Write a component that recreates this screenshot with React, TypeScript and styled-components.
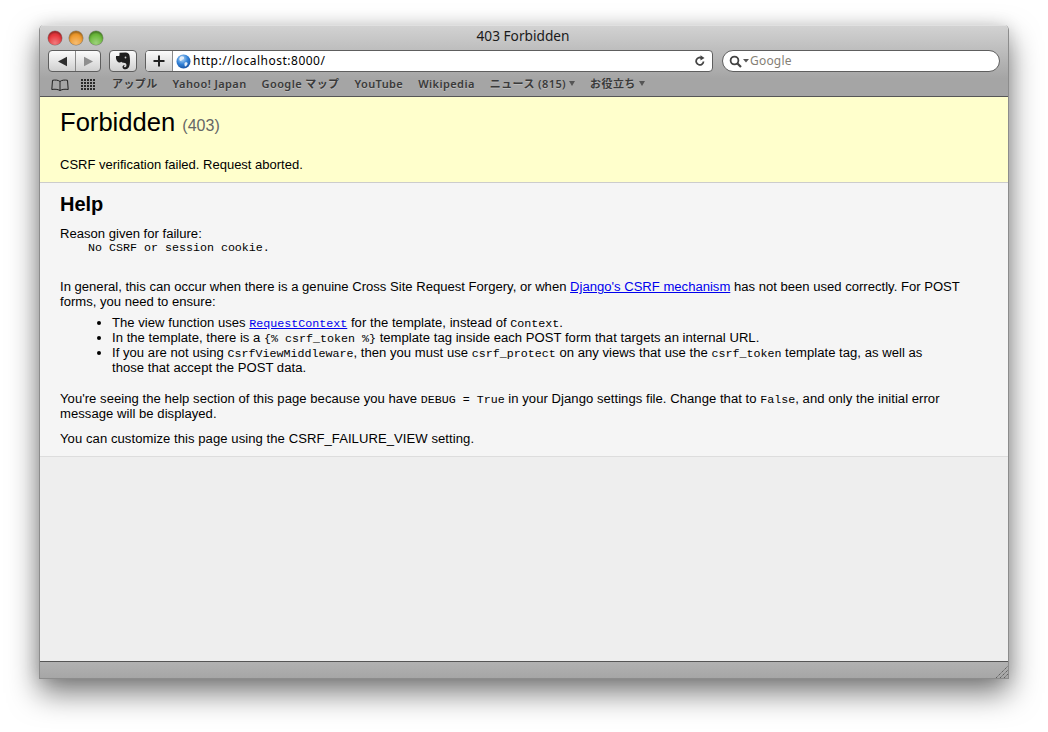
import React from "react";
import styled, { createGlobalStyle } from "styled-components";

const GlobalStyle = createGlobalStyle`
  html, body {
    margin: 0;
    padding: 0;
    background: #fff;
  }
  body {
    width: 1048px;
    height: 732px;
    overflow: hidden;
    font-family: "Liberation Sans", Arial, sans-serif;
  }
`;

const bookmarks = [
  { label: "アップル" },
  { label: "Yahoo! Japan" },
  { label: "Google マップ" },
  { label: "YouTube" },
  { label: "Wikipedia" },
  { label: "ニュース (815)", menu: true },
  { label: "お役立ち", menu: true },
];

const App = () => {
  return (
    <Desktop>
      <GlobalStyle />
      <Window>
        <Chrome>
          <TitleRow>
            <Lights>
              <Light $color="#e8383d" />
              <Light $color="#ef9a2d" />
              <Light $color="#6cba3c" />
            </Lights>
            <Title>403 Forbidden</Title>
          </TitleRow>
          <NavRow>
            <ButtonGroup>
              <NavButton $w={27}>
                <svg width="11" height="11" viewBox="0 0 11 11">
                  <path d="M1 5.500 10 .8v9.400z" fill="#2e2e2e" />
                </svg>
              </NavButton>
              <NavButton $w={25} $divided>
                <svg width="11" height="11" viewBox="0 0 11 11">
                  <path d="M10 5.500 1 .8v9.400z" fill="#8f8f8f" />
                </svg>
              </NavButton>
            </ButtonGroup>
            <ButtonGroup>
              <NavButton $w={27}>
                <svg width="16" height="18" viewBox="0 0 16 18">
                  <path
                    d="M4.500.8 10.500.6c2.500.2 3.800 1.200 4.100 3.300.4 3 .6 6 .1 8.600-.4 2.400-1.500 4.600-3.900 4.800-2 .1-3.300-.8-3.300-2.300 0-1.300 1.200-2 2.300-1.600-.1.600-.9.600-.9 1.200 0 .6.700.9 1.400.7 1.100-.3 1.300-1.500 1.100-2.700-.2-1.200-1.200-1.700-2.500-1.800-1.300-.1-2.100-.3-2.600-1C5.500 11 3.400 10.800 2.200 9.200 1 7.700.8 5.800 1 4h2.800c.5 0 .7-.3.700-.8z"
                    fill="#1f1f1f"
                  />
                  <circle cx="10.500" cy="5.500" r=".9" fill="#cfcfcf" />
                </svg>
              </NavButton>
            </ButtonGroup>
            <AddressGroup>
              <AddButton>
                <svg width="12" height="12" viewBox="0 0 12 12">
                  <path d="M6 .5v11M.5 6h11" stroke="#222" strokeWidth="2" />
                </svg>
              </AddButton>
              <AddressField>
                <svg width="15" height="15" viewBox="0 0 15 15">
                  <defs>
                    <radialGradient id="globe" cx="40%" cy="30%" r="75%">
                      <stop offset="0" stopColor="#b9dcf8" />
                      <stop offset=".55" stopColor="#2f7fd6" />
                      <stop offset="1" stopColor="#174f9e" />
                    </radialGradient>
                  </defs>
                  <circle cx="7.500" cy="7.500" r="7" fill="url(#globe)" />
                  <path d="M5 2.500c2-.5 3.500.5 3 2-.5 1.200-2 .8-2.500 2-.4 1-1.500.5-2-.5-.4-1.200.3-3 1.500-3.500zM9 8.500c1.500-.5 3 0 2.500 1.500-.5 1.300-1.500 2.500-2.500 2.500-.5-1.200-1-3.300 0-4z" fill="#e6eef7" />
                </svg>
                <AddressText>http://localhost:8000/</AddressText>
                <svg width="12" height="12" viewBox="0 0 12 12">
                  <path d="M9.500 6.500a3.700 3.700 0 1 1-1.500-3.300" fill="none" stroke="#444" strokeWidth="1.800" />
                  <path d="M6.500.3 10.500 3 6.500 5.500z" fill="#444" />
                </svg>
              </AddressField>
            </AddressGroup>
            <SearchField>
              <svg width="21" height="13" viewBox="0 0 21 13">
                <circle cx="5.500" cy="5.500" r="3.900" fill="none" stroke="#444" strokeWidth="1.800" />
                <path d="m8.500 8.500 3.500 3.500" stroke="#444" strokeWidth="2.200" />
                <path d="M14 4h6l-3 3.500z" fill="#555" />
              </svg>
              <SearchPlaceholder>Google</SearchPlaceholder>
            </SearchField>
          </NavRow>
          <BookmarkRow>
            <svg width="18" height="12" viewBox="0 0 18 12">
              <path d="M9 2.500C7.500 1 4 .8 1.500 1.300L.8 10.500c2.800-.5 6-.3 8.200 1 2.200-1.300 5.400-1.500 8.200-1l-.7-9.200C14 .8 10.500 1 9 2.500zm0 0v9" fill="none" stroke="#222" />
            </svg>
            <GridIcon>
              {Array.from({ length: 20 }).map((_, i) => (
                <i key={i} />
              ))}
            </GridIcon>
            <Bookmarks>
              {bookmarks.map((b) => (
                <Bookmark key={b.label}>
                  {b.label}
                  {b.menu && <MenuArrow />}
                </Bookmark>
              ))}
            </Bookmarks>
          </BookmarkRow>
        </Chrome>

        <Content>
          <Summary>
            <Heading>
              Forbidden <StatusCode>(403)</StatusCode>
            </Heading>
            <SummaryText>CSRF verification failed. Request aborted.</SummaryText>
          </Summary>

          <Info>
            <HelpHeading>Help</HelpHeading>
            <Reason>Reason given for failure:</Reason>
            <Pre>{"    No CSRF or session cookie."}</Pre>
            <Para $top={24}>
              In general, this can occur when there is a genuine Cross Site Request Forgery, or when{" "}
              <a href="#csrf">Django's CSRF mechanism</a> has not been used correctly. For POST forms, you need to ensure:
            </Para>
            <List>
              <li>
                The view function uses <a href="#ctx"><Code>RequestContext</Code></a> for the template, instead of{" "}
                <Code>Context</Code>.
              </li>
              <li>
                In the template, there is a <Code>{"{% csrf_token %}"}</Code> template tag inside each POST form that targets an internal URL.
              </li>
              <li>
                If you are not using <Code>CsrfViewMiddleware</Code>, then you must use <Code>csrf_protect</Code> on any views that use the{" "}
                <Code>csrf_token</Code> template tag, as well as those that accept the POST data.
              </li>
            </List>
            <Para $top={16} $track={0.04}>
              You're seeing the help section of this page because you have <Code>DEBUG = True</Code> in your Django settings file. Change that to{" "}
              <Code>False</Code>, and only the initial error message will be displayed.
            </Para>
            <Para $top={10} $track={0.06}>You can customize this page using the CSRF_FAILURE_VIEW setting.</Para>
          </Info>

          <Explanation />
        </Content>

        <StatusBar>
          <svg width="13" height="13" viewBox="0 0 13 13">
            <path d="M1 13 13 1M5 13l8-8M9 13l4-4" stroke="#5e5e5e" strokeDasharray="1.400 .7" />
          </svg>
        </StatusBar>
      </Window>
    </Desktop>
  );
};

const Desktop = styled.div`
  width: 1048px;
  height: 732px;
  box-sizing: border-box;
  padding: 25px 39px 54px 39px;
  background: #fff;
`;

const Window = styled.div`
  height: 100%;
  display: flex;
  flex-direction: column;
  border-radius: 5px 5px 0 0;
  border: solid #8c8c8c;
  border-width: 0 1px 1px 1px;
  box-shadow: 0 14px 30px rgba(0, 0, 0, 0.52), 0 0 16px rgba(0, 0, 0, 0.12);
  overflow: hidden;
`;

const Chrome = styled.header`
  height: 72px;
  flex: none;
  display: flex;
  flex-direction: column;
  background: linear-gradient(#d2d2d2, #a5a5a5 75%);
  border-top: 1px solid #e0e0e0;
  border-bottom: 1px solid #565656;
  box-sizing: border-box;
`;

const TitleRow = styled.div`
  height: 23px;
  flex: none;
  display: flex;
  align-items: center;
  position: relative;
  padding-left: 8px;
`;

const Lights = styled.div`
  display: flex;
  gap: 6.5px;
  margin-top: 1px;
`;

const Light = styled.span<{ $color: string }>`
  width: 14px;
  height: 14px;
  border-radius: 50%;
  background: radial-gradient(circle at 50% 85%, #fff5 0, transparent 55%), ${(p) => p.$color};
  box-shadow: inset 0 2px 2px rgba(0, 0, 0, 0.35), 0 0 0 0.5px rgba(0, 0, 0, 0.35);
`;

const Title = styled.div`
  position: absolute;
  left: 0;
  right: 0;
  top: 1px;
  padding-right: 2px;
  text-align: center;
  font-family: "Noto Sans", sans-serif;
  font-size: 13.7px;
  line-height: 18px;
  color: #1a1a1a;
`;

const NavRow = styled.div`
  height: 24px;
  flex: none;
  display: flex;
  align-items: center;
  padding: 0 8px 0 8px;
`;

const ButtonGroup = styled.div`
  display: flex;
  height: 22px;
  margin-right: 8px;
  border: 1px solid #5e5e5e;
  border-radius: 4px;
  box-sizing: border-box;
  overflow: hidden;
  background: linear-gradient(#fbfbfb, #d0d0d0);
`;

const NavButton = styled.div<{ $w: number; $divided?: boolean }>`
  width: ${(p) => p.$w - 1}px;
  display: flex;
  align-items: center;
  justify-content: center;
  ${(p) => p.$divided && "border-left: 1px solid #8a8a8a;"}
`;

const AddressGroup = styled.div`
  flex: 1;
  display: flex;
  height: 22px;
  margin-right: 9px;
  border: 1px solid #5e5e5e;
  border-radius: 4px;
  box-sizing: border-box;
  overflow: hidden;
  background: #fff;
`;

const AddButton = styled.div`
  width: 27px;
  flex: none;
  display: flex;
  align-items: center;
  justify-content: center;
  background: linear-gradient(#fbfbfb, #d0d0d0);
  border-right: 1px solid #8a8a8a;
  box-sizing: border-box;
`;

const AddressField = styled.div`
  flex: 1;
  display: flex;
  align-items: center;
  padding: 0 6px 0 3px;
`;

const AddressText = styled.span`
  flex: 1;
  margin: -2px 0 0 2px;
  font-family: "Noto Sans", sans-serif;
  font-size: 12px;
  letter-spacing: 0.5px;
  color: #000;
`;

const SearchField = styled.div`
  width: 278px;
  height: 22px;
  flex: none;
  display: flex;
  align-items: center;
  padding-left: 6px;
  box-sizing: border-box;
  background: #fff;
  border: 1px solid #5e5e5e;
  border-radius: 11px;
`;

const SearchPlaceholder = styled.span`
  margin: -2px 0 0 0;
  font-family: "Noto Sans", sans-serif;
  font-size: 12px;
  letter-spacing: 0.2px;
  color: #857f76;
`;

const BookmarkRow = styled.div`
  flex: 1;
  display: flex;
  align-items: center;
  padding: 0 0 0 11px;
`;

const GridIcon = styled.div`
  display: grid;
  grid-template-columns: repeat(5, 2px);
  grid-auto-rows: 2px;
  gap: 1px;
  margin-left: 12px;

  i {
    background: #2a2a2a;
  }
`;

const Bookmarks = styled.nav`
  display: flex;
  margin: -2px 0 0 17px;
  gap: 15px;
`;

const Bookmark = styled.span`
  display: inline-flex;
  align-items: center;
  font-family: "Noto Sans", "Noto Sans CJK JP", sans-serif;
  font-size: 11px;
  font-weight: 600;
  letter-spacing: 0.4px;
  line-height: 14px;
  color: #3a3a3a;
  text-shadow: 0 1px 0 rgba(255, 255, 255, 0.25);
`;

const MenuArrow = styled.i`
  width: 0;
  height: 0;
  margin-left: 3px;
  border: solid transparent;
  border-width: 5px 3.5px 0;
  border-top-color: #555;
`;

const Content = styled.main`
  flex: 1;
  display: flex;
  flex-direction: column;
  min-height: 0;
  font-size: 13.08px;
  line-height: 15px;
  color: #000;
  background: #eee;

  a {
    color: #00e;
  }
`;

const Summary = styled.section`
  height: 86px;
  flex: none;
  box-sizing: border-box;
  padding: 9px 20px 0;
  background: #ffc;
  border-bottom: 1px solid #ccc;
`;

const Heading = styled.h1`
  margin: 0;
  font-size: 25.6px;
  line-height: 32px;
  font-weight: normal;
`;

const StatusCode = styled.span`
  font-size: 16px;
  color: #666;
`;

const SummaryText = styled.p`
  margin: 15px 0 0;
  font-size: 13px;
`;

const Info = styled.section`
  height: 274px;
  flex: none;
  box-sizing: border-box;
  padding: 10px 20px 0;
  background: #f5f5f5;
  border-bottom: 1px solid #ddd;
`;

const HelpHeading = styled.h2`
  margin: 0 0 10px;
  font-size: 20px;
  line-height: 23px;
  font-weight: bold;
`;

const Reason = styled.p`
  margin: 0;
`;

const Pre = styled.pre`
  margin: 1px 0 0;
  font-family: "Liberation Mono", monospace;
  font-size: 11.67px;
  line-height: 13px;
`;

const Para = styled.p<{ $top: number; $track?: number }>`
  margin: ${(p) => p.$top}px 0 0;
  letter-spacing: ${(p) => p.$track ?? 0}px;
`;

const List = styled.ul`
  margin: 6px 0 0;
  padding: 0 44px 0 52px;
  letter-spacing: 0.03px;
`;

const Code = styled.code`
  font-family: "Liberation Mono", monospace;
  font-size: 11.67px;
  line-height: 0;
  letter-spacing: 0;
`;

const Explanation = styled.div`
  flex: 1;
`;

const StatusBar = styled.footer`
  height: 17px;
  flex: none;
  display: flex;
  align-items: flex-end;
  justify-content: flex-end;
  box-sizing: border-box;
  background: linear-gradient(#b2b2b2, #a6a6a6);
  border-top: 1px solid #555;
`;

export default App;
